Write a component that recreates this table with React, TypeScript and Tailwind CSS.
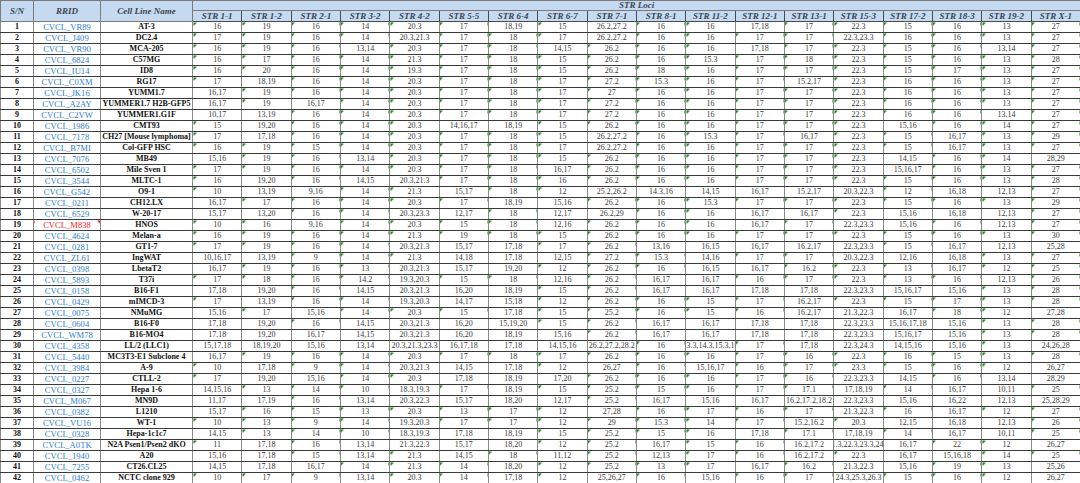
const loci = [
  "STR 1-1", "STR 1-2", "STR 2-1", "STR 3-2", "STR 4-2", "STR 5-5",
  "STR 6-4", "STR 6-7", "STR 7-1", "STR 8-1", "STR 11-2", "STR 12-1",
  "STR 13-1", "STR 15-3", "STR 17-2", "STR 18-3", "STR 19-2", "STR X-1",
];

// RRID | cell line | 18 loci
const raw = `
CVCL_VR89|AT-3|16|19|16|14|20.3|17|18,19|15|26.2,27.2|16|16|17,18|17|22.3|15|16|13|27
CVCL_J409|DC2.4|17|19|16|14|20.3,21.3|17|18|17|26.2,27.2|16|16|17|17|22.3,23.3|16|16|13|27
CVCL_VR90|MCA-205|16|19|16|13,14|20.3|17|18|14,15|26.2|16|16|17,18|17|22.3|15|16|13,14|27
CVCL_6824|C57MG|16|17|16|14|21.3|17|18|15|26.2|16|15.3|17|18|22.3|15|16|13|28
CVCL_IU14|ID8|16|20|16|14|19.3|17|18|15|26.2|18|16|17|17|22.3|15|17|13|27
CVCL_C0XM|RG17|17|18,19|16|14|20.3|17|18|17|27.2|15.3|16|17|15.2,17|22.3|16|16|13|27
CVCL_JK16|YUMM1.7|16,17|19|16|14|20.3|17|18|17|27|16|16|17|17|22.3|16|16|13|27
CVCL_A2AY|YUMMER1.7 H2B-GFP5|16,17|19|16,17|14|20.3|17|18|17|27.2|16|16|17|17|22.3|16|16|13|27
CVCL_C2VW|YUMMER1.G1F|10,17|13,19|16|14|20.3|17|18|17|27.2|16|16|17|17|22.3|16|16|13,14|27
CVCL_1986|CMT93|15|19,20|16|14|20.3|14,16,17|18,19|15|26.2|16|16|17|17|22.3|15,16|16|14|27
CVCL_7178|CH27 [Mouse lymphoma]|17|17,18|16|14|20.3|17|18|15|26.2,27.2|16|15.3|17|16,17|22.3|15|16,17|13|29
CVCL_B7MI|Col-GFP HSC|16|19|15|14|20.3|17|18|17|26.2,27.2|16|16|17|17|22.3|15|16,17|13|27
CVCL_7076|MB49|15,16|19|16|13,14|20.3|17|18|15|26.2|16|16|17|17|22.3|14,15|16|14|28,29
CVCL_6502|Mile Sven 1|17|19|16|14|20.3|17|18|16,17|26.2|16|16|17|17|22.3|15,16,17|16|13|27
CVCL_3544|MLTC-1|16|19,20|16|14,15|20.3,21.3|17|18|16|26.2|16|16|17|17|22.3|15|16|13|28
CVCL_G542|O9-1|10|13,19|9,16|14|21.3|15,17|18|12|25.2,26.2|14.3,16|14,15|16,17|15.2,17|20.3,22.3|12|16,18|12,13|27
CVCL_0211|CH12.LX|16,17|17|16|14|20.3|17|18,19|15,16|26.2|16|15.3|17|17|22.3|15|16|13|29
CVCL_6529|W-20-17|15,17|13,20|16|14|20.3,23.3|12,17|18|12,17|26.2,29|16|16|16,17|16,17|22.3|15,16|16,18|12,13|27
CVCL_M838|HNOS|10|16|9,16|14|20.3|15|18|12,16|26.2|16|16|16,17|17|22.3,23.3|15,16|16|12,13|27
CVCL_4624|Melan-a|16|19|16|14|21.3|19|18|15|26.2|16|16|17|17|22.3|15|16|13|30
CVCL_0281|GT1-7|17|19|16|14|20.3,21.3|15,17|17,18|17|26.2|13,16|16,15|16,17|16.2,17|22.3,23.3|15|16,17|12,13|25,28
CVCL_ZL61|IngWAT|10,16,17|13,19|9|14|21.3|14,18|17,18|12,15|27.2|15.3|14,16|17|17|20.3,22.3|12,16|16,18|13|27
CVCL_0398|LbetaT2|16,17|19|16|13|20.3,21.3|15,17|19,20|12|26.2|16|16,15|16,17|16.2|22.3|13|16,17|12|25
CVCL_5893|T37i|17|18|16|14.2|19.3,20.3|15|18|12,16|26.2|16,17|16,17|16|17|22.3|13|16|12,13|26
CVCL_0158|B16-F1|17,18|19,20|16|14,15|20.3,21.3|16,20|18,19|15|26.2|16,17|16,17|17,18|17,18|22.3,23.3|15,16,17|15,16|13|28
CVCL_0429|mIMCD-3|17|13,19|16|14|19.3,20.3|14,17|15,18|12|26.2|16|15|17|16.2,17|22.3|15|17|13|28
CVCL_0075|NMuMG|15,16|17|15,16|14|20.3|15|17,18|15|25.2|16|15|16|16.2,17|21.3,22.3|16,17|18|12|27,28
CVCL_0604|B16-F0|17,18|19,20|16|14,15|20.3,21.3|16,20|15,19,20|15|26.2|16,17|16,17|17,18|17,18|22.3,23.3|15,16,17,18|15,16|13|28
CVCL_WM78|B16-MO4|17,18|19,20|16,17|14,15|20.3,21.3|16,20|18,19|15,16|26.2|16,17|16,17|17,18|17,18|22.3,23.3|15,16,17|15,16|13|28
CVCL_4358|LL/2 (LLC1)|15,17,18|18,19,20|15,16|13,14|20.3,21.3,23.3|16,17,18|17,18|14,15,16|26.2,27.2,28.2|16|13.3,14.3,15.3,16|17|17,18|22.3,24.3|14,15,16|15,16|13|24,26,28
CVCL_5440|MC3T3-E1 Subclone 4|16,17|19|16|14|20.3|17|18|17|26.2|16|16|17|16|22.3|16|15|13|28
CVCL_3984|A-9|10|17,18|9|14|20.3,21.3|14,15|17,18|12|26,27|16|15,16,17|16|17|23.3|15|16|12|26,27
CVCL_0227|CTLL-2|17|19,20|15,16|14|20.3|17,18|18,19|17,20|26.2|16|16|17|16|22.3,23.3|14,15|16|13,14|28,29
CVCL_0327|Hepa 1-6|14,15,16|13|14|10|18.3,19.3|17|18,19|15|25.2|15|16|17|17.1|17,18,19|14|16,17|10,11|25
CVCL_M067|MN9D|11,17|17,19|16|13,14|20.3,22.3|15,17|18,20|12,17|25.2|16,17|15,16|16,17|16.2,17.2,18.2|22.3,23.3|15,16|16,22|12,13|25,28,29
CVCL_0382|L1210|15,17|16|15|13|20.3|13|17|12|27,28|16|17|16|17|21.3,22.3|16|16,17|12|27
CVCL_VU16|WT-1|10|13|9|14|19.3,20.3|17|17|12|29|15.3|14|17|15.2,16.2|20.3|12,15|16,18|12,13|26
CVCL_0328|Hepa-1c1c7|14,15|13|14|10|18.3,19.3|17,18|18,19|15|25.2|15|16|17,18|17.1|17,18,19|14|16,17|10,11|25
CVCL_A0TK|N2A Psen1/Psen2 dKO|11|17,18|16|13,14|21.3,22.3|15,17|18,20|12|25.2|16,17|15|16|16.2,17.2|21.3,22.3,23.3,24.3|16,17|22|12|26,27
CVCL_1940|A20|15,16|17,18|15|13,14|21.3|14,15|18|11,12|25.2|12,13|17|16|16.2,17.2|22.3|16,17|15,16,18|14|25
CVCL_7255|CT26.CL25|14,15|17,18|16,17|14|21.3|14|18,20|12|25.2|13|17|16,17|16.2|21.3,22.3|15,16|19|13|25,26
CVCL_0462|NCTC clone 929|10|17|9|13,14|20.3|14|17,18|12|25,26,27|16|15,16|16|17|24.3,25.3,26.3|15|16|12|26,27
`;

const rows = raw
  .trim()
  .split("\n")
  .map((line) => line.split("|"));

export default function App() {
  return (
    <div className="w-[1080px] h-[483px] overflow-hidden bg-white font-['Liberation_Serif',serif]">
      <table className="table-fixed border-collapse w-[1080px]">
        <colgroup>
          <col className="w-[33px]" />
          <col className="w-[67px]" />
          <col className="w-[92px]" />
          {loci.map((l) => (
            <col key={l} className="w-[49.33px]" />
          ))}
        </colgroup>
        <thead className="bg-[#c5d9f1] text-[#3b4652] italic font-bold text-[9px]">
          <tr className="h-[10px]">
            <th rowSpan={2} className="p-0 leading-none border border-[#7a7a7a]">
              S/N
            </th>
            <th rowSpan={2} className="p-0 leading-none border border-[#7a7a7a]">
              RRID
            </th>
            <th rowSpan={2} className="p-0 leading-none border border-[#7a7a7a]">
              Cell Line Name
            </th>
            <th colSpan={18} className="p-0 leading-none border border-[#7a7a7a]">
              STR Loci
            </th>
          </tr>
          <tr className="h-[11px]">
            {loci.map((l) => (
              <th key={l} className="p-0 leading-none border border-[#4a4a4a] whitespace-nowrap">
                {l}
              </th>
            ))}
          </tr>
        </thead>
        <tbody className="text-[8px] leading-[10px]">
          {rows.map((r, i) => {
            const [rrid, name, ...vals] = r;
            const flagged = rrid === "CVCL_M838";
            return (
              <tr key={rrid} className="h-[11px]">
                <td className="p-0 text-center font-bold text-[#111] border-x border-x-[#8a8a8a] border-y border-y-[#3a3a3a]">
                  {i + 1}
                </td>
                <td
                  className={`p-0 text-center text-[8.6px] border-x border-x-[#8a8a8a] border-y border-y-[#3a3a3a] ${
                    flagged
                      ? "text-[#ff1a1a] bg-[linear-gradient(225deg,#e01010_2.2px,transparent_2.2px)]"
                      : "text-[#2f80d0]"
                  }`}
                >
                  {rrid}
                </td>
                <td className="p-0 text-center font-bold text-[#111] whitespace-nowrap border-x border-x-[#8a8a8a] border-y border-y-[#3a3a3a]">
                  {name}
                </td>
                {vals.map((v, j) => (
                  <td
                    key={j}
                    className={`p-0 text-[#3a3a3a] border-x border-x-[#8a8a8a] border-y border-y-[#3a3a3a] ${
                      v.includes(",")
                        ? ""
                        : "bg-[linear-gradient(135deg,#1a7d1a_2.2px,transparent_2.2px)]"
                    }`}
                  >
                    <div className="flex justify-center overflow-hidden whitespace-nowrap">
                      {v}
                    </div>
                  </td>
                ))}
              </tr>
            );
          })}
        </tbody>
      </table>
    </div>
  );
}
